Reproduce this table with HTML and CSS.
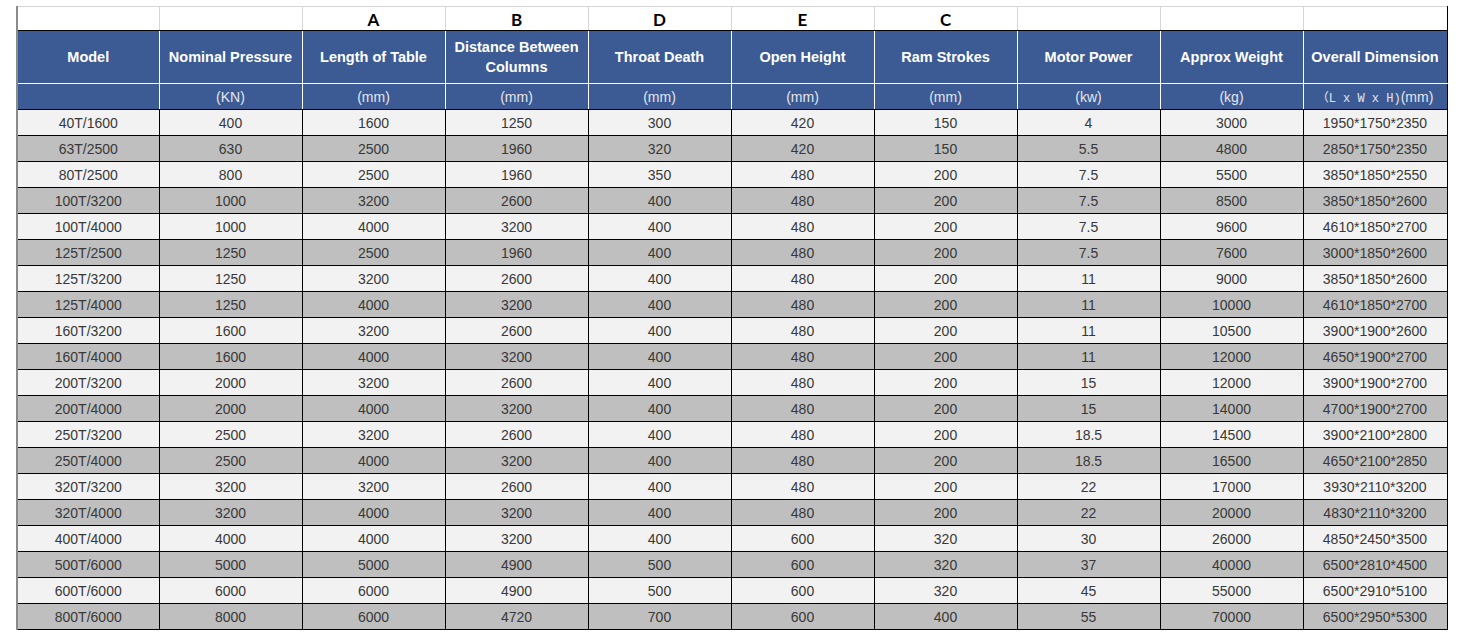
FILE: index.html
```html
<!DOCTYPE html>
<html>
<head>
<meta charset="utf-8">
<link rel="stylesheet" href="styles.css">
</head>
<body>
<div class="sheet">
<table class="spec">
<colgroup>
<col class="c-first"><col><col><col><col><col><col><col><col><col class="c-last">
</colgroup>
<tbody>
<tr class="letters">
<td></td><td></td><td>A</td><td>B</td><td>D</td><td>E</td><td>C</td><td></td><td></td><td></td>
</tr>
<tr class="head">
<td>Model</td><td>Nominal Pressure</td><td>Length of Table</td><td>Distance Between Columns</td><td>Throat Death</td><td>Open Height</td><td>Ram Strokes</td><td>Motor Power</td><td>Approx Weight</td><td>Overall Dimension</td>
</tr>
<tr class="units">
<td></td><td>(KN)</td><td>(mm)</td><td>(mm)</td><td>(mm)</td><td>(mm)</td><td>(mm)</td><td>(kw)</td><td>(kg)</td><td><span class="cjk">（L x W x H)</span>(mm)</td>
</tr>
<tr class="odd"><td>40T/1600</td><td>400</td><td>1600</td><td>1250</td><td>300</td><td>420</td><td>150</td><td>4</td><td>3000</td><td>1950*1750*2350</td></tr>
<tr class="even"><td>63T/2500</td><td>630</td><td>2500</td><td>1960</td><td>320</td><td>420</td><td>150</td><td>5.5</td><td>4800</td><td>2850*1750*2350</td></tr>
<tr class="odd"><td>80T/2500</td><td>800</td><td>2500</td><td>1960</td><td>350</td><td>480</td><td>200</td><td>7.5</td><td>5500</td><td>3850*1850*2550</td></tr>
<tr class="even"><td>100T/3200</td><td>1000</td><td>3200</td><td>2600</td><td>400</td><td>480</td><td>200</td><td>7.5</td><td>8500</td><td>3850*1850*2600</td></tr>
<tr class="odd"><td>100T/4000</td><td>1000</td><td>4000</td><td>3200</td><td>400</td><td>480</td><td>200</td><td>7.5</td><td>9600</td><td>4610*1850*2700</td></tr>
<tr class="even"><td>125T/2500</td><td>1250</td><td>2500</td><td>1960</td><td>400</td><td>480</td><td>200</td><td>7.5</td><td>7600</td><td>3000*1850*2600</td></tr>
<tr class="odd"><td>125T/3200</td><td>1250</td><td>3200</td><td>2600</td><td>400</td><td>480</td><td>200</td><td>11</td><td>9000</td><td>3850*1850*2600</td></tr>
<tr class="even"><td>125T/4000</td><td>1250</td><td>4000</td><td>3200</td><td>400</td><td>480</td><td>200</td><td>11</td><td>10000</td><td>4610*1850*2700</td></tr>
<tr class="odd"><td>160T/3200</td><td>1600</td><td>3200</td><td>2600</td><td>400</td><td>480</td><td>200</td><td>11</td><td>10500</td><td>3900*1900*2600</td></tr>
<tr class="even"><td>160T/4000</td><td>1600</td><td>4000</td><td>3200</td><td>400</td><td>480</td><td>200</td><td>11</td><td>12000</td><td>4650*1900*2700</td></tr>
<tr class="odd"><td>200T/3200</td><td>2000</td><td>3200</td><td>2600</td><td>400</td><td>480</td><td>200</td><td>15</td><td>12000</td><td>3900*1900*2700</td></tr>
<tr class="even"><td>200T/4000</td><td>2000</td><td>4000</td><td>3200</td><td>400</td><td>480</td><td>200</td><td>15</td><td>14000</td><td>4700*1900*2700</td></tr>
<tr class="odd"><td>250T/3200</td><td>2500</td><td>3200</td><td>2600</td><td>400</td><td>480</td><td>200</td><td>18.5</td><td>14500</td><td>3900*2100*2800</td></tr>
<tr class="even"><td>250T/4000</td><td>2500</td><td>4000</td><td>3200</td><td>400</td><td>480</td><td>200</td><td>18.5</td><td>16500</td><td>4650*2100*2850</td></tr>
<tr class="odd"><td>320T/3200</td><td>3200</td><td>3200</td><td>2600</td><td>400</td><td>480</td><td>200</td><td>22</td><td>17000</td><td>3930*2110*3200</td></tr>
<tr class="even"><td>320T/4000</td><td>3200</td><td>4000</td><td>3200</td><td>400</td><td>480</td><td>200</td><td>22</td><td>20000</td><td>4830*2110*3200</td></tr>
<tr class="odd"><td>400T/4000</td><td>4000</td><td>4000</td><td>3200</td><td>400</td><td>600</td><td>320</td><td>30</td><td>26000</td><td>4850*2450*3500</td></tr>
<tr class="even"><td>500T/6000</td><td>5000</td><td>5000</td><td>4900</td><td>500</td><td>600</td><td>320</td><td>37</td><td>40000</td><td>6500*2810*4500</td></tr>
<tr class="odd"><td>600T/6000</td><td>6000</td><td>6000</td><td>4900</td><td>500</td><td>600</td><td>320</td><td>45</td><td>55000</td><td>6500*2910*5100</td></tr>
<tr class="even"><td>800T/6000</td><td>8000</td><td>6000</td><td>4720</td><td>700</td><td>600</td><td>400</td><td>55</td><td>70000</td><td>6500*2950*5300</td></tr>
</tbody>
</table>
</div>
</body>
</html>
```
FILE: styles.css
```css
html, body {
  margin: 0;
  padding: 0;
  background: #ffffff;
}

.sheet {
  padding: 6px 0 0 16px;
}

.spec {
  border-collapse: collapse;
  table-layout: fixed;
  width: 1431px;
  font-family: "Liberation Sans", Arial, sans-serif;
  font-size: 14px;
  color: #383838;
}

.spec col {
  width: 143px;
}

.spec col.c-first {
  width: 142px;
}

.spec col.c-last {
  width: 144px;
}

.spec td {
  padding: 0;
  text-align: center;
  vertical-align: middle;
  border: 1px solid #000;
  overflow: hidden;
  white-space: nowrap;
}

.spec td:first-child {
  border-left: 2px solid #8a8a8a;
}

.letters td {
  height: 23px;
  border-top: 1px solid #d6d6d6;
  border-left: 1px solid #d6d6d6;
  border-right: 1px solid #d6d6d6;
  border-bottom: 1px solid #000;
  font-family: Lato, "Open Sans", sans-serif;
  font-weight: 700;
  font-size: 17px;
  color: #000;
  vertical-align: bottom;
  line-height: 20px;
}

.head td {
  height: 52px;
  background: #3c5b95;
  color: #ffffff;
  font-weight: 700;
  font-size: 14.5px;
  line-height: 20px;
  white-space: normal;
  border-left-color: #ffffff;
  border-right-color: #ffffff;
  border-bottom-color: #ffffff;
  border-top-color: #000;
}

.units td {
  height: 25px;
  background: #3c5b95;
  color: #e4e6ec;
  font-size: 14px;
  border-left-color: #ffffff;
  border-right-color: #ffffff;
  border-top-color: #ffffff;
}

.spec tr td:last-child {
  border-right: 1px solid #000;
}

.cjk {
  font-family: "Liberation Mono", "Noto Sans CJK SC", monospace;
  font-size: 12px;
}

.odd td {
  height: 25px;
  background: #f2f2f2;
}

.even td {
  height: 25px;
  background: #bfbfbf;
}
```
